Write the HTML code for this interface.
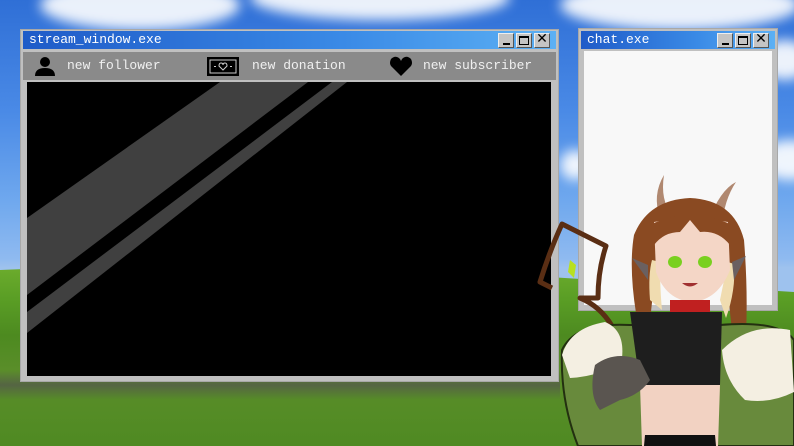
<!DOCTYPE html>
<html><head><meta charset="utf-8">
<style>
*{margin:0;padding:0;box-sizing:border-box}
body{width:794px;height:446px;overflow:hidden;position:relative;font-family:"Liberation Mono",monospace;
background:linear-gradient(180deg,#2f6fd6 0%,#4a8ae6 25%,#6fa8ee 45%,#8fbaf0 58%,#9ec2ee 60%);}
.grass{position:absolute;left:0;top:262px;width:794px;height:184px;
background:linear-gradient(180deg,#6fae2e 0%,#5a9e25 20%,#4d8a20 40%,#5b8e2a 60%,#4f8a22 100%);
clip-path:polygon(0 8px,200px 0,500px 12px,794px 30px,794px 184px,0 184px);}
.cloud{position:absolute;background:#fff;border-radius:50%;filter:blur(6px);opacity:.9}
.win{position:absolute;background:#c0c0c0;border:1px solid #a8a8a8}
.title{position:absolute;background:linear-gradient(90deg,#1f5bc8,#3a8ae6 60%,#5cb0f4);color:#fff;font-size:13px;line-height:18px;padding-left:6px}
.btn{position:absolute;top:2px;width:16px;height:15px;background:#c4c4c4;border:1px solid;border-color:#eee #555 #555 #eee}
.tb{position:absolute;background:#8a8a8a;color:#f0f0f0;font-size:13px}
.tb span{position:absolute;top:6px}
</style></head><body>
<div class="cloud" style="left:40px;top:-20px;width:200px;height:50px"></div>
<div class="cloud" style="left:250px;top:-25px;width:260px;height:45px"></div>
<div class="cloud" style="left:560px;top:-20px;width:240px;height:50px"></div>
<div class="cloud" style="left:760px;top:140px;width:60px;height:40px"></div>
<div class="cloud" style="left:560px;top:150px;width:30px;height:30px"></div>
<div class="cloud" style="left:760px;top:40px;width:50px;height:40px"></div>
<div class="grass"></div>
<div style="position:absolute;left:0;top:370px;width:560px;height:30px;background:linear-gradient(180deg,rgba(90,50,110,.0),rgba(80,50,100,.45),rgba(80,50,100,0));"></div>

<!-- stream window -->
<div class="win" style="left:20px;top:29px;width:539px;height:353px">
 <div class="title" style="left:2px;top:1px;width:533px;height:18px">stream_window.exe
  <div class="btn" style="left:475px"><div style="position:absolute;left:4px;top:9px;width:7px;height:2px;background:#000"></div></div>
  <div class="btn" style="left:493px"><div style="position:absolute;left:2px;top:2px;width:10px;height:9px;border:1px solid #000;border-top-width:2px"></div></div>
  <div class="btn" style="left:511px;font-size:14px;line-height:13px;text-align:center;color:#000">✕</div>
 </div>
 <div class="tb" style="left:2px;top:22px;width:533px;height:28px">
  <svg style="position:absolute;left:10px;top:4px" width="24" height="20" viewBox="0 0 24 20"><circle cx="12" cy="6" r="5" fill="#000"/><path d="M2 20 Q2 12 12 12 Q22 12 22 20Z" fill="#000"/></svg>
  <span style="left:44px">new follower</span>
  <svg style="position:absolute;left:184px;top:5px" width="32" height="19" viewBox="0 0 32 19"><rect width="32" height="19" fill="#000"/><rect x="3" y="3" width="26" height="13" fill="none" stroke="#ccc" stroke-width="1"/><path d="M16 13 L12 9 Q12 6 14 6 Q16 6 16 8 Q16 6 18 6 Q20 6 20 9Z" fill="none" stroke="#ccc"/><path d="M7 9.5h2M23 9.5h2" stroke="#ccc"/></svg>
  <span style="left:229px">new donation</span>
  <svg style="position:absolute;left:366px;top:4px" width="24" height="21" viewBox="0 0 24 21"><path d="M12 20 L2 10 Q0 7 2 3 Q5 0 8 1 Q11 2 12 5 Q13 2 16 1 Q19 0 22 3 Q24 7 22 10Z" fill="#000"/></svg>
  <span style="left:400px">new subscriber</span>
 </div>
 <div style="position:absolute;left:6px;top:52px;width:524px;height:294px;background:#000;overflow:hidden">
  <svg width="524" height="294" style="position:absolute;left:0;top:0"><polygon points="193,0 281,0 0,213 0,136" fill="#404040"/><polygon points="305,0 320,0 0,251 0,230" fill="#404040"/></svg>
 </div>
</div>

<!-- chat window -->
<div class="win" style="left:578px;top:28px;width:200px;height:283px">
 <div class="title" style="left:2px;top:2px;width:194px;height:18px">chat.exe
  <div class="btn" style="left:136px"><div style="position:absolute;left:4px;top:9px;width:7px;height:2px;background:#000"></div></div>
  <div class="btn" style="left:154px"><div style="position:absolute;left:2px;top:2px;width:10px;height:9px;border:1px solid #000;border-top-width:2px"></div></div>
  <div class="btn" style="left:172px;font-size:14px;line-height:13px;text-align:center;color:#000">✕</div>
 </div>
 <div style="position:absolute;left:5px;top:22px;width:188px;height:254px;background:#f8f8f8"></div>
</div>

<!-- character -->
<svg style="position:absolute;left:0;top:0" width="794" height="446" viewBox="0 0 794 446">
 <path d="M552 288 L540 282 Q550 250 562 224 L606 246 Q598 270 598 298 L580 298 Q600 306 612 326" fill="none" stroke="#5a2e14" stroke-width="5" stroke-linejoin="round"/>
 <path d="M570 260 L576 265 L574 278 L568 272Z" fill="#b8e020"/>
 <path d="M660 218 Q652 195 664 175 Q660 200 672 215Z" fill="#b08870"/>
 <path d="M708 222 Q720 190 736 182 Q724 200 722 226Z" fill="#b08870"/>
 <path d="M638 325 Q628 270 634 235 Q648 200 690 198 Q734 200 744 240 Q748 290 746 335 L732 330 Q728 300 728 270 L656 270 Q652 300 650 322Z" fill="#8a4a22"/>
 <path d="M650 300 Q648 275 652 260 L660 262 Q660 290 662 310Z M720 300 Q724 280 728 262 L734 264 Q736 290 726 318Z" fill="#f0dcb0"/>
 <path d="M632 258 L648 265 L648 280 Z M746 256 L732 262 L734 280Z" fill="#6a6060"/>
 <path d="M654 222 Q690 215 728 222 L730 270 Q718 300 692 302 Q666 300 656 272Z" fill="#f4d6c6"/>
 <path d="M650 225 Q690 205 732 225 L730 245 Q718 230 700 232 L690 220 L680 232 Q664 232 654 245Z" fill="#8a4a22"/>
 <ellipse cx="675" cy="262" rx="7" ry="6" fill="#7ad020"/><ellipse cx="705" cy="262" rx="7" ry="6" fill="#7ad020"/>
 <path d="M682 283 Q690 290 698 283Z" fill="#a03030"/>
 <rect x="670" y="300" width="40" height="14" fill="#c02020"/>
 <circle cx="685" cy="322" r="5" fill="#e0b030"/>
 <path d="M562 350 Q575 322 630 325 L720 325 Q780 320 794 340 L794 446 L578 446 Q560 400 562 350Z" fill="#688a3c" stroke="#233010" stroke-width="2"/>
 <path d="M630 312 L722 312 L720 385 L640 385Z" fill="#1e1e1e"/>
 <path d="M640 385 L720 385 L718 446 L642 446Z" fill="#f2d2c2"/>
 <path d="M645 435 L715 435 L716 446 L644 446Z" fill="#111"/>
 <path d="M562 355 Q570 328 605 322 Q625 330 622 358 Q605 376 570 378Z" fill="#f4efe2"/>
 <path d="M722 350 Q750 322 790 330 L794 392 Q770 404 745 400 Q724 380 722 350Z" fill="#f4efe2"/>
 <path d="M595 365 Q615 350 640 360 L650 380 Q640 395 620 400 L600 410 Q588 395 595 365Z" fill="#5a5550"/>
</svg>
</body></html>
